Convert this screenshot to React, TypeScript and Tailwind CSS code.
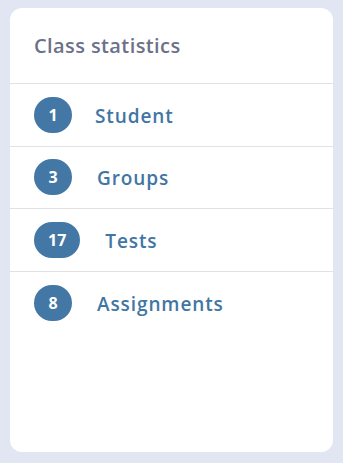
import React from "react";

const stats = [
  { count: 1, label: "Student", gap: "ml-[23px]" },
  { count: 3, label: "Groups", gap: "ml-[25px]" },
  { count: 17, label: "Tests", gap: "ml-[25px]" },
  { count: 8, label: "Assignments", gap: "ml-[25px]" },
];

const StatRow = ({
  count,
  label,
  gap,
  last,
}: {
  count: number;
  label: string;
  gap: string;
  last?: boolean;
}) => (
  <div
    className={`flex items-center h-[62.5px] px-6 ${last ? "" : "border-b border-[#e2e2e4]"}`}
  >
    <span className="inline-flex items-center justify-center h-9 min-w-[38px] px-3.5 rounded-full bg-[#4377a5] text-white text-[16px] font-bold">
      {count}
    </span>
    <span className={`${gap} pt-0.5 text-[19px] tracking-[0.9px] font-semibold text-[#4176a4]`}>
      {label}
    </span>
  </div>
);

export default function App() {
  return (
    <div
      className="min-h-[463px] bg-[#e2e6f3] pt-2 px-2.5 pb-3"
      style={{ fontFamily: "'Open Sans', 'Noto Sans', sans-serif" }}
    >
      <div className="bg-white rounded-xl h-[444px]">
        <div className="h-[76px] border-b border-[#e2e2e4] px-6 pt-[28px]">
          <h2 className="text-[20px] tracking-[0.4px] font-semibold text-[#6c7189] leading-none">
            Class statistics
          </h2>
        </div>
        {stats.map((s, i) => (
          <StatRow
            key={s.label}
            count={s.count}
            label={s.label}
            gap={s.gap}
            last={i === stats.length - 1}
          />
        ))}
      </div>
    </div>
  );
}
